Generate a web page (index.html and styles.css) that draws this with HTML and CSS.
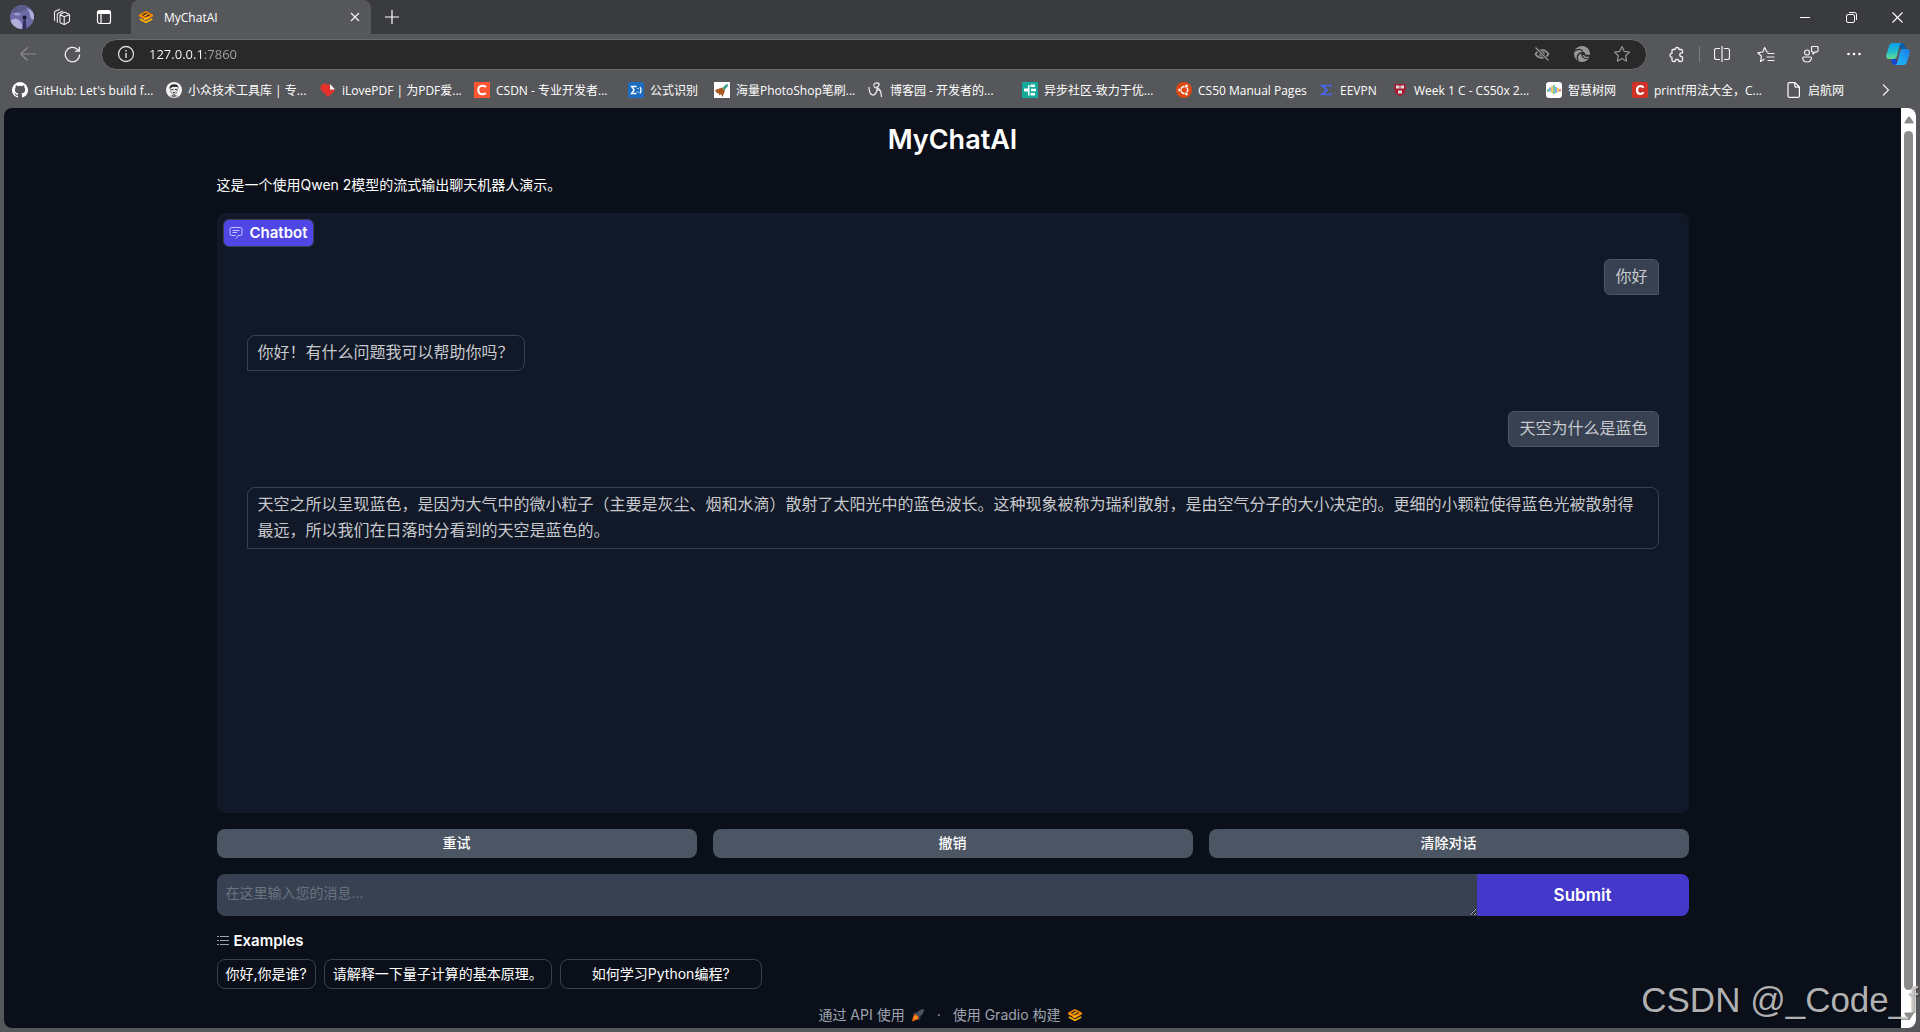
FILE: index.html
```html
<!DOCTYPE html>
<html lang="zh-CN">
<head>
    <meta charset="UTF-8">
    <meta name="viewport" content="width=device-width, initial-scale=1.0">
    <title>MyChatAI</title>
    <link rel="stylesheet" href="styles.css">
</head>
<body>
    <!-- shared symbols -->
    <svg class="sprite" aria-hidden="true">
        <symbol id="gradio" viewBox="0 0 16 16">
            <path d="M1.800 10 8 13.300 14.200 10" fill="none" stroke="#ffb300" stroke-width="1.700"/>
            <path d="M8 2 15 5.800v1.500L8 11.200 1 7.300V5.800z" fill="#ff8c00"/>
            <path d="M8 3.400 12.500 5.900 8 8.500 3.500 5.900z" fill="#5a3416"/>
            <path d="M5.500 6.700 9.500 4.400l1.300.7L6.800 7.400z" fill="#ffc21a"/>
            <path d="m5.500 10.300 4.500-2.500 1.200.8-4.500 2.500z" fill="#ffc21a"/>
        </symbol>
    </svg>

    <header class="browser">
        <div class="title-bar">
            <button class="avatar" aria-label="Profile">
                <svg width="24" height="24" viewBox="0 0 24 24">
                    <defs><clipPath id="round"><circle cx="12" cy="12" r="12"/></clipPath></defs>
                    <g clip-path="url(#round)">
                        <path d="M0 0h24v24H0z" fill="#6c6ba6"/>
                        <path d="M0 0h24v7q-7-4-12-1T0 7z" fill="#5b5a8c"/>
                        <path d="M0 16q5-4 9-1t3 9H0zM16 3q5 1 8 6v6q-4-1-4-5t-4-7z" fill="#b3addb"/>
                        <path d="M3 9q4-3 8 0-3 3-8 0z" fill="#9d97cf"/>
                        <circle cx="14.500" cy="12.500" r="2" fill="#1f1a33"/>
                        <path d="m13.500 14 2 0 1 10h-4z" fill="#30305f"/>
                    </g>
                </svg>
            </button>
            <button class="bar-btn" aria-label="Workspaces">
                <svg width="18" height="18" viewBox="0 0 18 18" fill="none" stroke="#eee" stroke-width="1.100" stroke-linejoin="round">
                    <path d="M7 7.300q0-.8.800-1.200l3-1.500q.8-.4 1.600 0l3.300 1.400q.8.400.8 1.200v5.600q0 .8-.8 1.200L12 16.300q-.8.300-1.500 0L7.800 15q-.8-.4-.8-1.200zM7.300 6.800l3.900 1.900 5-2M11.200 9v7"/>
                    <path d="M4.800 14.500 4.300 14V6.500q0-.8.800-1.200L10 3M2.200 12.500l-.7-.5V4.500q0-.8.800-1.200L7 1.200"/>
                </svg>
            </button>
            <button class="bar-btn" aria-label="Tab actions">
                <svg width="16" height="16" viewBox="0 0 16 16" fill="none" stroke="#fff" stroke-width="1.200">
                    <rect x="1.500" y="1.500" width="13" height="13" rx="2"/>
                    <path d="M2 2.500h12v2H2z" fill="#fff"/>
                    <path d="M5 5v9.500"/>
                </svg>
            </button>
            <div class="tab">
                <svg width="16" height="16"><use href="#gradio"/></svg>
                <span class="tab-title">MyChatAI</span>
                <button class="tab-close" aria-label="Close tab">
                    <svg width="10" height="10" viewBox="0 0 10 10" stroke="#f4f4f4" stroke-width="1.200"><path d="m1 1 8 8M9 1 1 9"/></svg>
                </button>
            </div>
            <button class="bar-btn" aria-label="New tab">
                <svg width="14" height="14" viewBox="0 0 14 14" stroke="#fff" stroke-width="1.200"><path d="M7 0v14M0 7h14"/></svg>
            </button>
            <div class="window-controls">
                <button aria-label="Minimize"><svg width="10" height="10" viewBox="0 0 10 10" stroke="#fff"><path d="M0 5.500h10"/></svg></button>
                <button aria-label="Restore"><svg width="11" height="11" viewBox="0 0 11 11" fill="none" stroke="#fff"><rect x=".5" y="2.500" width="8" height="8" rx="1.500"/><path d="M3 .5h5.500q2 0 2 2V8"/></svg></button>
                <button aria-label="Close"><svg width="11" height="11" viewBox="0 0 11 11" stroke="#fff" stroke-width="1.100"><path d="m.5.500 10 10M10.500.500l-10 10"/></svg></button>
            </div>
        </div>

        <div class="toolbar">
            <button class="tool-btn" aria-label="Back">
                <svg width="16" height="16" viewBox="0 0 16 16" fill="none" stroke="#8e8f92" stroke-width="1.200"><path d="M16 8H.8M7.500 1.500.8 8l6.700 6.500"/></svg>
            </button>
            <button class="tool-btn" aria-label="Refresh">
                <svg width="17" height="17" viewBox="0 0 17 17" fill="none" stroke="#f0f0f0" stroke-width="1.300"><path d="M15.700 8.500A7.200 7.200 0 1 1 13.300 3.200l1.900 1.900M15.400.8v4.400H11"/></svg>
            </button>
            <div class="address">
                <svg class="info" width="18" height="18" viewBox="0 0 18 18" fill="none" stroke="#d8d8d8" stroke-width="1.300"><circle cx="9" cy="9" r="7.500"/><path d="M9 8v5M9 5v1.500" stroke-width="1.500"/></svg>
                <input type="text" class="url" value="127.0.0.1:7860" aria-label="Address">
                <button aria-label="Tracking">
                    <svg width="16" height="16" viewBox="0 0 16 16" fill="none" stroke="#969696" stroke-width="1.600"><path d="M1.500 8Q4 4 8 4t6.500 4Q12 12 8 12T1.500 8z"/><circle cx="8" cy="8" r="2" fill="#969696"/><path d="m1 1 14 14" stroke="#292929" stroke-width="3"/><path d="m1.500 1.500 13 13" stroke-width="1.300"/></svg>
                </button>
                <button aria-label="Browser mode">
                    <svg width="16" height="16" viewBox="0 0 16 16"><circle cx="8" cy="8" r="8" fill="#969696"/><path d="M0 5.500Q5 1.500 8.500 5M16 10q-1 2.500-4 2.200-4-.5-3.500-4.200M4 15Q1.500 8 8 6.500" fill="none" stroke="#292929" stroke-width="1.300"/><path d="M8 5.500q3 0 3.200 3L16 9v3q-5 2-8-1-1.500-3 0-5.500z" fill="#292929"/><path d="M9.500 9q.5 3 5.500 2.500" fill="none" stroke="#969696" stroke-width="1.500"/></svg>
                </button>
                <button aria-label="Add to favorites">
                    <svg width="18" height="18" viewBox="0 0 18 18" fill="none" stroke="#969696" stroke-width="1.200" stroke-linejoin="round"><path d="m9 1.500 2.300 4.900 5.200.7-3.800 3.700.9 5.400L9 13.600l-4.600 2.600.9-5.400L1.500 7.100l5.200-.7z"/></svg>
                </button>
            </div>
            <button class="tool-btn" aria-label="Extensions">
                <svg width="17" height="17" viewBox="0 0 17 17" fill="none" stroke="#f2f2f2" stroke-width="1.300" stroke-linejoin="round"><path d="M4 3.500h2a2 2 0 1 1 4 0H12q1.500 0 1.500 1.500v1.800h-.7a2 2 0 1 0 0 4h.7V14q0 1.500-1.500 1.500h-2a2 2 0 0 0-4 0H4.500Q3 15.500 3 14v-2.700a2 2 0 1 1 0-4V4.500q0-1 1-1z"/></svg>
            </button>
            <span class="divider"></span>
            <button class="tool-btn" aria-label="Split screen">
                <svg width="16" height="16" viewBox="0 0 16 16" fill="none" stroke="#f2f2f2" stroke-width="1.200"><path d="M6 2.500H2.500q-2 0-2 2v7q0 2 2 2H6M10 2.500h3.500q2 0 2 2v7q0 2-2 2H10M8 0v16"/></svg>
            </button>
            <button class="tool-btn" aria-label="Favorites">
                <svg width="18" height="17" viewBox="0 0 18 17" fill="none" stroke="#f2f2f2" stroke-width="1.200" stroke-linejoin="round"><path d="M11.500 6 9.700 5.800 7.700 1.500 5.700 6 .8 6.800l3.700 3.400L3.600 15.500 7.500 13M10.500 7.500h7M9.500 11h8M10.500 14.500h7"/></svg>
            </button>
            <button class="tool-btn" aria-label="Share feedback">
                <svg width="17" height="17" viewBox="0 0 17 17" fill="none" stroke="#f2f2f2" stroke-width="1.200" stroke-linejoin="round"><circle cx="5" cy="6.500" r="2.500"/><path d="M1.500 11h7q1 0 1 1-.5 4-4.500 4T.7 12q0-1 .8-1zM9.500 1.500q0-1 1-1H15q1 0 1 1v3.300q0 1-1 1h-1.500L11 8V5.800q-1.500 0-1.500-1z"/></svg>
            </button>
            <button class="tool-btn" aria-label="Settings">
                <svg width="14" height="4" viewBox="0 0 14 4" fill="#fff"><circle cx="1.500" cy="2" r="1.300"/><circle cx="7" cy="2" r="1.300"/><circle cx="12.500" cy="2" r="1.300"/></svg>
            </button>
            <button class="tool-btn" aria-label="Copilot">
                <svg width="24" height="24" viewBox="0 0 24 24">
                    <defs>
                        <linearGradient id="cop1" x1="0" y1="0" x2="0" y2="1"><stop offset="0" stop-color="#0a9fe8"/><stop offset=".5" stop-color="#1fb9d0"/><stop offset="1" stop-color="#63dd92"/></linearGradient>
                        <linearGradient id="cop2" x1="1" y1="0" x2="0" y2="1"><stop offset="0" stop-color="#1b7be6"/><stop offset="1" stop-color="#20c0fb"/></linearGradient>
                    </defs>
                    <path d="M12 1h4q2 0 2.500 2l1.500 4h-5z" fill="#0b5ba8"/>
                    <path d="M5 17h5l2 6H9q-2.500 0-3-2z" fill="#1747d1"/>
                    <path d="M7 1h9q-2 0-2.700 3L11 14q-.7 3-4 3H3Q-.5 17 .3 13L3 4q.8-3 4-3z" fill="url(#cop1)"/>
                    <path d="M17 7h4q3.500 0 2.700 4L21 20q-.8 3-4 3H9q2 0 2.700-3L14 10q.7-3 3-3z" fill="url(#cop2)"/>
                </svg>
            </button>
        </div>

        <nav class="bookmarks">
            <a href="#">
                <svg width="16" height="16" viewBox="0 0 16 16" fill="#fff"><path d="M8 0a8 8 0 0 0-2.530 15.590c.4.070.55-.17.55-.38v-1.490c-2.230.49-2.700-.95-2.700-.95-.36-.92-.89-1.170-.89-1.170-.73-.5.060-.49.060-.49.800.060 1.230.83 1.230.83.71 1.220 1.870.87 2.330.66.070-.52.280-.87.510-1.070-1.780-.2-3.640-.89-3.640-3.950 0-.87.310-1.590.82-2.150-.080-.2-.36-1.020.080-2.120 0 0 .67-.21 2.200.82a7.600 7.600 0 0 1 4 0c1.530-1.040 2.200-.82 2.200-.82.44 1.100.16 1.920.080 2.120.51.56.82 1.270.82 2.150 0 3.070-1.870 3.750-3.650 3.950.29.25.54.73.54 1.480v2.200c0 .21.150.46.550.38A8 8 0 0 0 8 0z"/></svg>
                <span>GitHub: Let's build f...</span>
            </a>
            <a href="#">
                <svg width="16" height="16" viewBox="0 0 16 16"><circle cx="8" cy="8" r="8" fill="#f3f3f3"/><path d="M3.500 7Q3 2.500 8 2.300t4.500 4.700L11.500 5h-5z" fill="#333"/><path d="M4.500 6.500q0 6 3.500 6t3.500-6" fill="#ddd" stroke="#555" stroke-width=".6"/><path d="M5.500 7.500h2M9 7.500h2M7 10.500h2.200" stroke="#222" stroke-width=".9"/><path d="m4 14 4-1.500 4 1.500-4 1.500z" fill="#777"/></svg>
                <span>小众技术工具库 | 专...</span>
            </a>
            <a href="#">
                <svg width="16" height="16" viewBox="0 0 16 16"><path d="M8 15 1.500 8.500A4.200 4.200 0 0 1 8 3l2-1v5.500h5L14.500 9z" fill="#e5322d"/><path d="m10 2 5 5.500h-5z" fill="#fff"/></svg>
                <span>iLovePDF | 为PDF爱...</span>
            </a>
            <a href="#">
                <svg width="16" height="16" viewBox="0 0 16 16"><path d="M0 0h16v16H0z" fill="#fc5531"/><path d="M12 5.200Q10.500 3.500 8 3.700 4.500 4 4.300 8q0 4 3.700 4.300 2.300.1 3.800-1.300" fill="none" stroke="#fff" stroke-width="2"/></svg>
                <span>CSDN - 专业开发者...</span>
            </a>
            <a href="#" class="short">
                <svg width="16" height="16" viewBox="0 0 16 16"><rect width="16" height="16" rx="2" fill="#1d6cc0"/><path d="M8.500 4.500H3.500L6.200 8l-2.700 3.500h5M10 6v1M10 9.500v1M12 5q2 3 0 6.500" fill="none" stroke="#fff" stroke-width="1.300"/></svg>
                <span>公式识别</span>
            </a>
            <a href="#">
                <svg width="16" height="16" viewBox="0 0 16 16"><path d="M0 0h16v16H0z" fill="#fff"/><path d="m8.500 6 3.500-3.500 2-.5-.5 2.500L10.500 8z" fill="#2f9c86"/><path d="M1 8 8 5.500l3 3L8.500 15 7 12l-1.500 1.500L4.500 11 3 11.500z" fill="#a85a22"/></svg>
                <span>海量PhotoShop笔刷...</span>
            </a>
            <a href="#">
                <svg width="16" height="16" viewBox="0 0 16 16" fill="none" stroke="#e8e8e8" stroke-width="1.300"><path d="M1 5q0 7 3.500 8Q8 13.500 9.500 6M5.500 3.500q1-3 4-2.500t.5 3.500-4-.5M10 6q3 2 3.500 9M8 9q3.500-2.500 5 1"/></svg>
                <span>博客园 - 开发者的...</span>
            </a>
            <a href="#">
                <svg width="16" height="16" viewBox="0 0 16 16"><path d="M0 0h16v16H0z" fill="#12ab9b"/><path d="M2 6.500h5v3H2zM8.500 2.500h4.500v2.500H8.500zM9 6.700h5v2.500H9zM8.500 11H13v2.500H8.500zM6 3h1.500v10.500H6z" fill="#fff"/></svg>
                <span>异步社区-致力于优...</span>
            </a>
            <a href="#" class="medium">
                <svg width="16" height="16" viewBox="0 0 16 16"><circle cx="8" cy="8" r="8" fill="#dd4814"/><circle cx="8.300" cy="8" r="3.400" fill="none" stroke="#fff" stroke-width="1.500"/><g fill="#fff" stroke="#dd4814" stroke-width=".7"><circle cx="3.500" cy="8" r="1.700"/><circle cx="10.500" cy="3.900" r="1.700"/><circle cx="10.500" cy="12.100" r="1.700"/></g></svg>
                <span>CS50 Manual Pages</span>
            </a>
            <a href="#" class="tiny">
                <svg width="16" height="16" viewBox="0 0 16 16" fill="none" stroke="#4766f2" stroke-width="1.700"><path d="M13 5V3.500H4L9 8l-5 4.500h9V11"/></svg>
                <span>EEVPN</span>
            </a>
            <a href="#">
                <svg width="16" height="16" viewBox="0 0 16 16"><path d="M2.500 2h11v6q0 4-5.500 6Q2.500 12 2.500 8z" fill="#a51c30"/><path d="M4 3.500h3.500v3H4zM8.500 3.500H12v3H8.500zM6 8.500h4v3H6z" fill="#ddd"/></svg>
                <span>Week 1 C - CS50x 2...</span>
            </a>
            <a href="#" class="short">
                <svg width="16" height="16" viewBox="0 0 16 16"><rect width="16" height="16" rx="3" fill="#fff"/><g stroke-width="1.400"><path d="M2 7v3M8 3v9" stroke="#4baf7c"/><path d="M4 5.500v4M10 5v6" stroke="#4a90e2"/><path d="M6 4v7M12 6v4" stroke="#f0b429"/><path d="M14 7v2.500" stroke="#e2574c"/></g></svg>
                <span>智慧树网</span>
            </a>
            <a href="#">
                <svg width="16" height="16" viewBox="0 0 16 16"><rect width="16" height="16" rx="2" fill="#d13228"/><path d="M11.500 5.700Q10.500 4 8.300 4 5 4.300 5 8t3.300 4q2.200 0 3.200-1.700" fill="none" stroke="#fff" stroke-width="2.200"/></svg>
                <span>printf用法大全，C...</span>
            </a>
            <a href="#" class="short">
                <svg width="16" height="16" viewBox="0 0 16 16" fill="none" stroke="#fff" stroke-width="1.200" stroke-linejoin="round"><path d="M3.500.6H9L13.400 5v8.900q0 1.500-1.500 1.500H3.500Q2 15.400 2 13.900V2.100Q2 .6 3.500.6zM8.800.6V4q0 1.200 1.200 1.200h3.400"/></svg>
                <span>启航网</span>
            </a>
            <button class="more" aria-label="More bookmarks">
                <svg width="8" height="12" viewBox="0 0 8 12" fill="none" stroke="#eee" stroke-width="1.200"><path d="m1 .5 5.500 5.500L1 11.500"/></svg>
            </button>
        </nav>
    </header>

    <div class="viewport">
        <main class="page">
            <h1>MyChatAI</h1>
            <p class="description">这是一个使用Qwen 2模型的流式输出聊天机器人演示。</p>

            <section class="chatbot">
                <div class="chat-label">
                    <svg width="14" height="14" viewBox="0 0 14 14" fill="none" stroke="#c4c0f8" stroke-width="1"><path d="M9 10.500h2.500q1.500 0 1.500-1.500V4q0-1.500-1.500-1.500h-9Q1 2.500 1 4v5q0 1.500 1.500 1.500h4M9 10.500l-2 3M3.500 5.500h7M3.500 7.500H8"/></svg>
                    Chatbot
                </div>
                <div class="message user">你好</div>
                <div class="message bot">你好！有什么问题我可以帮助你吗？</div>
                <div class="message user">天空为什么是蓝色</div>
                <div class="message bot">天空之所以呈现蓝色，是因为大气中的微小粒子（主要是灰尘、烟和水滴）散射了太阳光中的蓝色波长。这种现象被称为瑞利散射，是由空气分子的大小决定的。更细的小颗粒使得蓝色光被散射得最远，所以我们在日落时分看到的天空是蓝色的。</div>
            </section>

            <div class="actions">
                <button>重试</button>
                <button>撤销</button>
                <button>清除对话</button>
            </div>

            <form class="composer">
                <textarea rows="1" placeholder="在这里输入您的消息..." aria-label="Message"></textarea>
                <button type="button">Submit</button>
            </form>

            <section class="examples">
                <h2>
                    <svg width="12" height="12" viewBox="0 0 12 12" stroke="#9ca3af" stroke-width="1"><path d="M0 1.500h2M0 5.500h2M0 9.500h2M3 1.500h9M3 5.500h9M3 9.500h9"/></svg>
                    Examples
                </h2>
                <div class="chips">
                    <button>你好,你是谁?</button>
                    <button>请解释一下量子计算的基本原理。</button>
                    <button class="wide">如何学习Python编程?</button>
                </div>
            </section>

            <footer>
                <a href="#">通过 API 使用
                    <svg width="14" height="14" viewBox="0 0 14 14"><path d="M13 1q-4 0-6.500 3L4 7l3 3 3-2.500Q13 5 13 1z" fill="#485260"/><path d="m6 4-3 .5L1.500 7 4 7zM10 8l-.5 3L7 12.500 7 10z" fill="#343c49"/><path d="m4.500 6 3.500 3.500q-1 2.500-3 2.500L1 13.500 2 9q.5-2 2.500-3z" fill="#ff6a00"/><circle cx="4.500" cy="9.500" r="1.300" fill="#ffab3d"/></svg>
                </a>
                <span>·</span>
                <a href="#">使用 Gradio 构建
                    <svg width="16" height="16"><use href="#gradio"/></svg>
                </a>
            </footer>
        </main>
        <div class="scrollbar">
            <svg width="10" height="8" viewBox="0 0 10 8" fill="#8b8b8b"><path d="M4 1q1-1 2 0l3.500 5q.5 1.500-1 1.500h-7Q0 7.500.5 6z"/></svg>
            <div class="thumb"></div>
            <svg width="10" height="8" viewBox="0 0 10 8" fill="#8b8b8b"><path d="M4 7q1 1 2 0l3.500-5Q10 .5 8.500.500h-7Q0 .500.500 2z"/></svg>
        </div>
    </div>
    <div class="watermark">CSDN @_Code_f</div>
</body>
</html>
```

FILE: styles.css
```css
* {
    margin: 0;
    padding: 0;
    box-sizing: border-box;
}

body {
    display: flex;
    flex-direction: column;
    height: 100vh;
    overflow: hidden;
    background: #56575b;
    font-family: Inter, "Noto Sans CJK SC", sans-serif;
    color: #fff;
}

button {
    border: none;
    background: none;
    color: inherit;
    font-family: inherit;
    cursor: pointer;
}

a {
    color: inherit;
    text-decoration: none;
}

svg {
    display: block;
    flex-shrink: 0;
}

.sprite {
    position: absolute;
    width: 0;
    height: 0;
}

/* Browser frame */
.browser {
    font-family: "Open Sans", "Noto Sans CJK SC", sans-serif;
    font-size: 12px;
}

.title-bar {
    display: flex;
    align-items: center;
    height: 34px;
    padding-left: 10px;
    background: #3a3b3e;
}

.avatar {
    margin-right: 7px;
}

.bar-btn {
    display: flex;
    align-items: center;
    justify-content: center;
    width: 42px;
    height: 34px;
}

.tab {
    display: flex;
    align-items: center;
    gap: 10px;
    width: 240px;
    height: 34px;
    margin-left: 6px;
    padding: 0 8px 0 7px;
    border-radius: 8px 8px 0 0;
    background: #56575b;
}

.tab-title {
    flex: 1;
}

.tab-close {
    display: flex;
    align-items: center;
    justify-content: center;
    width: 16px;
    height: 16px;
}

.window-controls {
    display: flex;
    margin-left: auto;
}

.window-controls button {
    display: flex;
    align-items: center;
    justify-content: center;
    width: 46px;
    height: 34px;
}

.toolbar {
    display: flex;
    align-items: center;
    height: 40px;
    padding-left: 6px;
}

.tool-btn {
    display: flex;
    align-items: center;
    justify-content: center;
    width: 44px;
    height: 32px;
}

.address {
    display: flex;
    align-items: center;
    flex: 1;
    height: 31px;
    margin: 0 8px 0 7px;
    padding: 0 4px 0 15px;
    border: 1px solid #6b6c70;
    border-radius: 16px;
    background: #292929;
}

.address button {
    display: flex;
    align-items: center;
    justify-content: center;
    width: 40px;
}

/* host is brighter than the port */
.url {
    flex: 1;
    margin-left: 14px;
    border: none;
    outline: none;
    background: linear-gradient(to right, #fff 54px, #a3a3a3 54px);
    -webkit-background-clip: text;
    background-clip: text;
    color: transparent;
    font-family: inherit;
    font-size: 13px;
}

.divider {
    width: 1px;
    height: 16px;
    background: #7b7c80;
}

.bookmarks {
    display: flex;
    align-items: center;
    height: 34px;
    padding: 0 24px 2px 12px;
}

.bookmarks a {
    display: flex;
    align-items: center;
    gap: 6px;
    width: 154px;
    white-space: nowrap;
}

.bookmarks .medium {
    width: 142px;
}

.bookmarks .short {
    width: 86px;
}

.bookmarks .tiny {
    width: 74px;
}

.more {
    margin-left: auto;
    padding: 4px 6px;
}

/* Page */
.viewport {
    display: flex;
    flex: 1;
    min-height: 0;
    margin: 0 4px 4px;
    overflow: hidden;
    border-radius: 8px;
    background: #0b0f19;
}

.page {
    flex: 1;
    max-width: 1536px;
    margin: 0 auto;
    padding: 16px 32px 0;
    font-size: 14px;
}

h1 {
    margin-bottom: 18px;
    font-size: 27px;
    font-weight: 600;
    line-height: 32px;
    text-align: center;
}

.description {
    margin-bottom: 17px;
    line-height: 22px;
}

.chatbot {
    position: relative;
    display: flex;
    flex-direction: column;
    gap: 40px;
    height: 600px;
    padding: 46px 30px;
    border-radius: 8px;
    background: #111827;
}

.chat-label {
    position: absolute;
    top: 6px;
    left: 6px;
    display: flex;
    align-items: center;
    gap: 7px;
    height: 28px;
    padding: 0 6px 2px 5px;
    border: 1px solid #374151;
    border-radius: 6px;
    background: #4f46e5;
    font-size: 15px;
    font-weight: 600;
}

.message {
    padding: 3px 10px 5px;
    border: 1px solid #374151;
    border-radius: 8px;
    color: #c7c9cd;
    font-size: 16px;
    line-height: 26px;
}

.user {
    align-self: flex-end;
    border-color: #4b5563;
    border-radius: 6px 6px 0 6px;
    background: #374151;
}

.bot {
    align-self: flex-start;
    border-bottom-left-radius: 0;
}

.actions {
    display: flex;
    gap: 16px;
    margin: 16px 0;
}

.actions button {
    flex: 1;
    height: 29px;
    padding-bottom: 3px;
    border-radius: 8px;
    background: #4b5563;
    font-size: 14px;
    font-weight: 500;
}

.composer {
    display: flex;
    height: 42px;
    overflow: hidden;
    border-radius: 8px;
}

.composer textarea {
    flex: 1;
    height: 42px;
    padding: 9px;
    border: none;
    outline: none;
    resize: vertical;
    overflow: hidden;
    background: #374151;
    color: #fff;
    font-family: inherit;
    font-size: 14px;
    line-height: 20px;
}

.composer textarea::placeholder {
    color: #6b7280;
}

.composer button {
    width: 212px;
    background: #4338ca;
    font-size: 17px;
    font-weight: 600;
}

.examples {
    margin: 15px 0 16px;
}

.examples h2 {
    display: flex;
    align-items: center;
    gap: 5px;
    margin-bottom: 8px;
    font-size: 15px;
    font-weight: 600;
    line-height: 20px;
}

.chips {
    display: flex;
    gap: 8px;
}

.chips button {
    height: 30px;
    padding: 0 8px 3px;
    border: 1px solid #374151;
    border-radius: 8px;
    font-size: 14px;
}

.chips .wide {
    min-width: 202px;
}

footer {
    display: flex;
    justify-content: center;
    gap: 12px;
    padding-right: 4px;
    color: #9ca3af;
    line-height: 20px;
}

footer a {
    display: flex;
    align-items: center;
    gap: 6px;
}

.scrollbar {
    display: flex;
    flex-direction: column;
    align-items: center;
    gap: 7px;
    width: 15px;
    padding: 8px 0;
    background: #fff;
}

.thumb {
    flex: 1;
    width: 9px;
    margin-bottom: 15px;
    border-radius: 5px;
    background: #8b8b8b;
}

.watermark {
    position: absolute;
    right: 2px;
    bottom: 11px;
    color: rgba(200, 200, 200, 0.9);
    font-family: "Liberation Sans", sans-serif;
    font-size: 35px;
    line-height: 42px;
    text-shadow: 1px 1px 1px rgba(0, 0, 0, 0.4);
}
```
